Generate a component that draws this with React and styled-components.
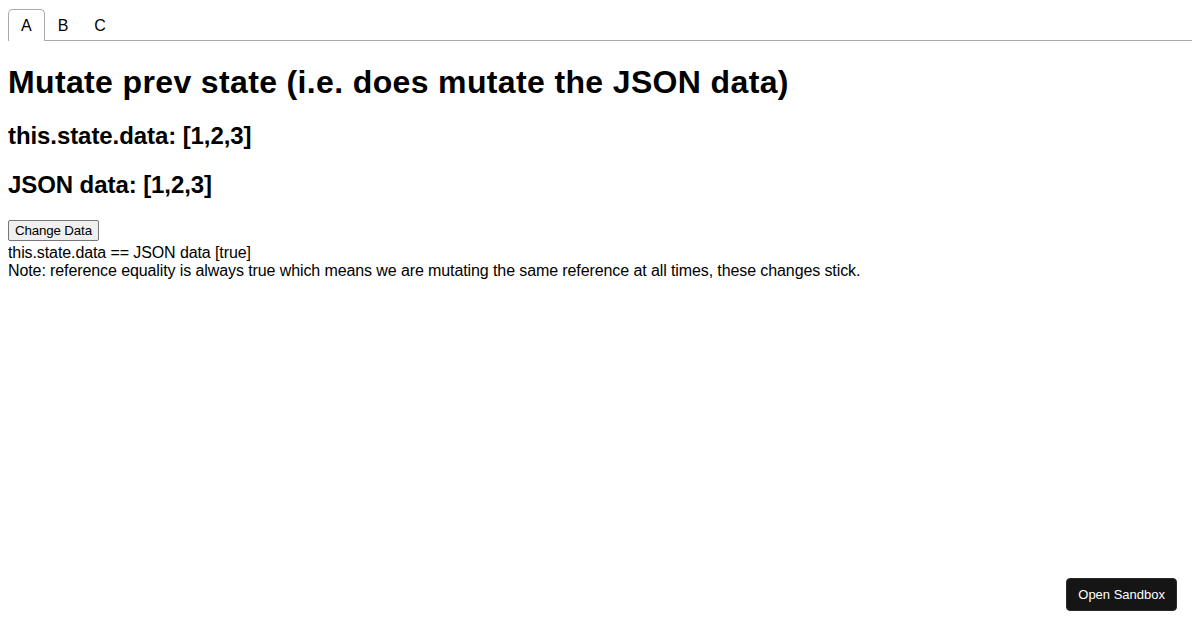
import { useState } from "react";
import styled, { createGlobalStyle } from "styled-components";

const GlobalStyle = createGlobalStyle`
  body {
    margin: 8px;
    font-family: "Liberation Sans", Arial, sans-serif;
    color: #000;
    background: #fff;
  }
`;

const TabList = styled.ul`
  border-bottom: 1px solid #aaa;
  margin: 0 0 10px;
  padding: 0;
  line-height: 1.2;
`;

const Tab = styled.li`
  display: inline-block;
  border: 1px solid ${(p) => (p.selected ? "#aaa" : "transparent")};
  border-bottom: none;
  bottom: -1px;
  position: relative;
  list-style: none;
  padding: 6px 12px;
  cursor: pointer;
  background: ${(p) => (p.selected ? "#fff" : "transparent")};
  border-radius: ${(p) => (p.selected ? "5px 5px 0 0" : "0")};
  font-size: 16px;
`;

const Title = styled.h1`
  font-size: 32px;
  line-height: 1.2;
  letter-spacing: 0.36px;
  margin: 21.44px 0;
`;

const SubTitle = styled.h2`
  font-size: 24px;
  line-height: 1.2;
  letter-spacing: -0.08px;
  margin: 19.92px 0;
`;

const ButtonRow = styled.div`
  height: 24px;
`;

const Button = styled.button`
  display: block;
  height: 21px;
  font-family: "Liberation Sans", Arial, sans-serif;
  font-size: 13.33px;
  letter-spacing: -0.15px;
  padding: 0 6px;
  border: 1px solid #767676;
  border-radius: 2px;
  background: #efefef;
  color: #000;
`;

const Line = styled.div`
  font-size: 16px;
  letter-spacing: -0.1px;
`;

const SandboxButton = styled.a`
  position: fixed;
  right: 23px;
  bottom: 19px;
  background: #151515;
  color: #fff;
  font-size: 13px;
  line-height: 15px;
  padding: 8px 11px;
  border-radius: 4px;
  text-decoration: none;
  border: 1px solid #2a2a2a;
`;

export default function App() {
  const [tab, setTab] = useState(0);
  return (
    <>
      <GlobalStyle />
      <TabList>
        {["A", "B", "C"].map((t, i) => (
          <Tab key={t} selected={tab === i} onClick={() => setTab(i)}>
            {t}
          </Tab>
        ))}
      </TabList>
      <Title>Mutate prev state (i.e. does mutate the JSON data)</Title>
      <SubTitle>this.state.data: [1,2,3]</SubTitle>
      <SubTitle>JSON data: [1,2,3]</SubTitle>
      <ButtonRow>
        <Button>Change Data</Button>
      </ButtonRow>
      <Line>this.state.data == JSON data [true]</Line>
      <Line>
        Note: reference equality is always true which means we are mutating the
        same reference at all times, these changes stick.
      </Line>
      <SandboxButton href="#">Open Sandbox</SandboxButton>
    </>
  );
}
